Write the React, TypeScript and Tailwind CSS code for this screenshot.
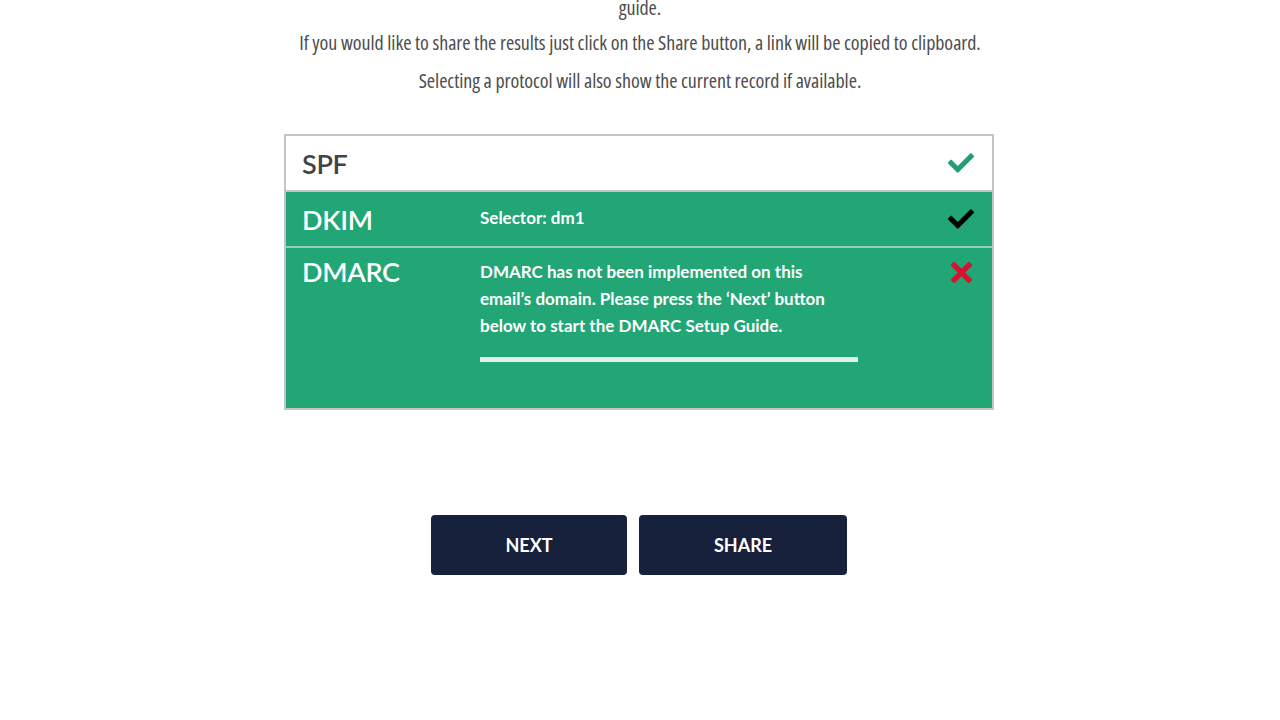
import { FaCheck } from 'react-icons/fa';

type Status = 'ok' | 'fail';

interface Protocol {
    name: string;
    status: Status;
    active: boolean;
    detail?: string;
}

const protocols: Protocol[] = [
    { name: 'SPF', status: 'ok', active: false },
    { name: 'DKIM', status: 'ok', active: true, detail: 'Selector: dm1' },
    {
        name: 'DMARC',
        status: 'fail',
        active: true,
        detail: "DMARC has not been implemented on this email\u2019s domain. Please press the \u2018Next\u2019 button below to start the DMARC Setup Guide.",
    },
];

const narrow = { fontFamily: '"Open Sans", "DejaVu Sans Condensed", sans-serif' };
const lato = { fontFamily: 'Lato, "Open Sans", sans-serif' };

// chunky cross used for a failed check
function Cross() {
    return (
        <svg viewBox="0 0 20 20" className="w-[21px] h-[21px]">
            <path d="M3 3 L17 17 M17 3 L3 17" stroke="#cf1530" strokeWidth={5} strokeLinecap="square" />
        </svg>
    );
}

function StatusIcon({ status, active }: { status: Status; active: boolean }) {
    if (status === 'fail') return <Cross />;
    return <FaCheck className={active ? 'w-[26px] h-[26px] text-black' : 'w-[26px] h-[26px] text-[#1f9f76]'} />;
}

function ProtocolRow({ p, last }: { p: Protocol; last: boolean }) {
    const isDmarc = p.name === 'DMARC';
    const divider = last ? '' : p.active ? 'border-b-2 border-[#8fd0b7]' : 'border-b-2 border-[#c4c4c4]';
    return (
        <div
            className={`flex pl-[16px] pr-[18px] ${p.active ? 'bg-[#22a675] text-white' : 'bg-white text-[#444]'} ${divider} ${isDmarc ? 'h-[160px] pt-[10px] items-start' : 'h-[56px] items-center'}`}
        >
            <div className="w-[178px] text-[27px] font-semibold leading-none tracking-[-0.3px]" style={lato}>
                {p.name}
            </div>
            <div className="flex-1 text-[17px] font-bold" style={lato}>
                {p.detail && (
                    <p className={isDmarc ? 'w-[362px] leading-[27px]' : 'leading-none -mt-1'}>{p.detail}</p>
                )}
                {isDmarc && <div className="mt-[18px] h-[5px] w-[378px] bg-[#dff3ea]" />}
            </div>
            <div className={isDmarc ? 'pt-[4px] pr-[2px]' : ''}>
                <StatusIcon status={p.status} active={p.active} />
            </div>
        </div>
    );
}

export default function App() {
    return (
        <div className="min-h-screen bg-white flex flex-col items-center overflow-hidden">
            {/* Intro copy */}
            <div
                className="text-[#4d4d4d] text-[20px] text-center leading-[38px] -mt-[11px] [font-stretch:75%] tracking-[-0.05px]"
                style={narrow}
            >
                <p>guide.</p>
                <p className="-mt-[3px]">If you would like to share the results just click on the Share button, a link will be copied to clipboard.</p>
                <p>Selecting a protocol will also show the current record if available.</p>
            </div>

            {/* Protocol table */}
            <div className="mt-[34px] w-[710px] -translate-x-px border-2 border-[#c4c4c4]">
                {protocols.map((p, i) => (
                    <ProtocolRow key={p.name} p={p} last={i === protocols.length - 1} />
                ))}
            </div>

            {/* Actions */}
            <div className="mt-[105px] flex gap-3 -translate-x-px">
                <button
                    className="w-[196px] h-[60px] rounded-[4px] bg-[#18213c] text-white text-[18px] font-bold"
                    style={lato}
                >
                    NEXT
                </button>
                <button
                    className="w-[208px] h-[60px] rounded-[4px] bg-[#18213c] text-white text-[18px] font-bold"
                    style={lato}
                >
                    SHARE
                </button>
            </div>
        </div>
    );
}
